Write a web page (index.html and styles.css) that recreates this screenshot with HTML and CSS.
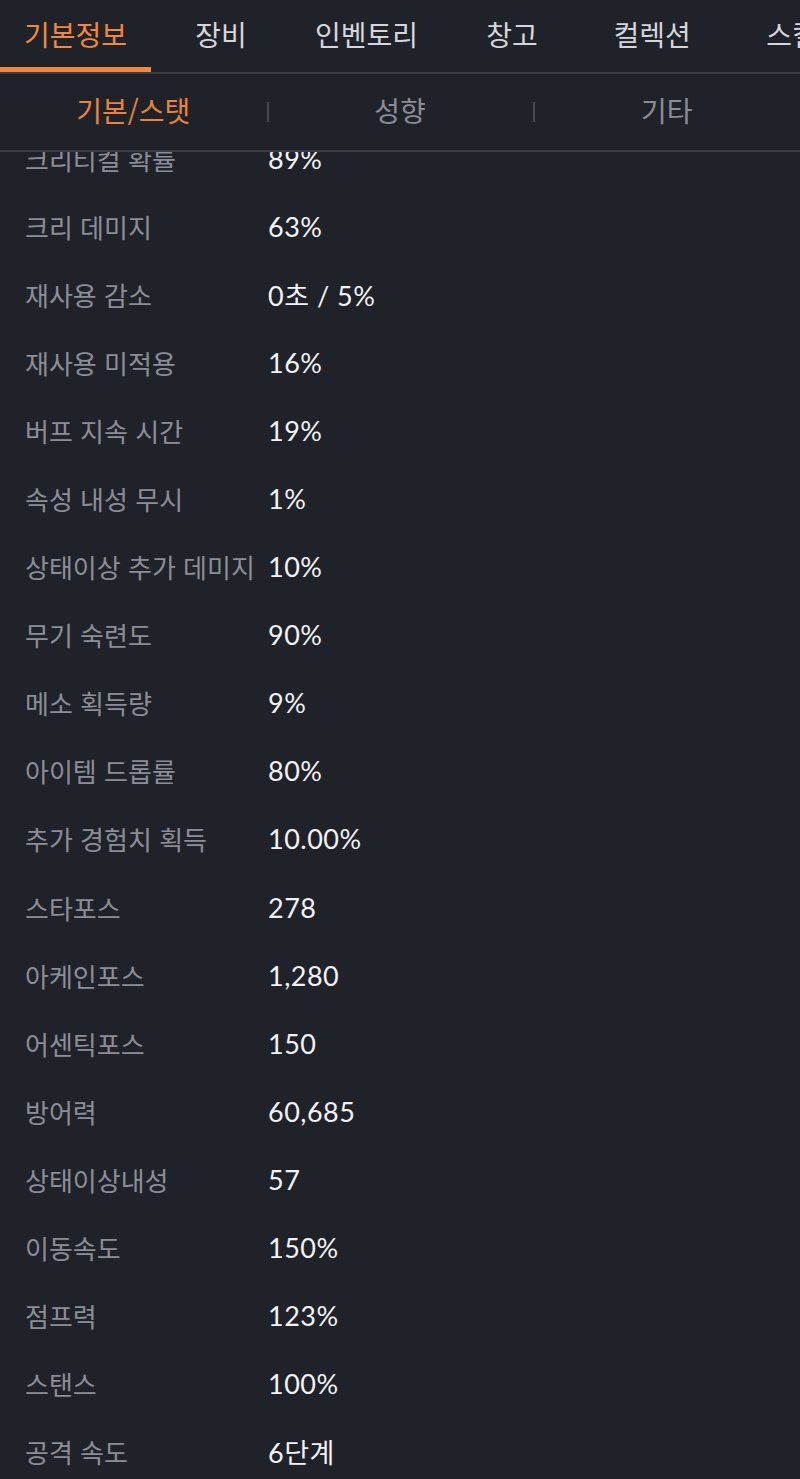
FILE: index.html
```html
<!DOCTYPE html>
<html lang="ko">
<head>
<meta charset="utf-8">
<link rel="stylesheet" href="styles.css">
</head>
<body>
<div class="page">
  <nav class="tabs">
    <div class="tab active">기본정보</div>
    <div class="tab">장비</div>
    <div class="tab">인벤토리</div>
    <div class="tab">창고</div>
    <div class="tab">컬렉션</div>
    <div class="tab">스킬</div>
  </nav>
  <nav class="subtabs">
    <div class="subtab active">기본/스탯</div>
    <div class="subtab">성향</div>
    <div class="subtab">기타</div>
  </nav>
  <div class="content">
    <ul class="stats">
      <li class="row"><span class="label">크리티컬 확률</span><span class="value">89%</span></li>
      <li class="row"><span class="label">크리 데미지</span><span class="value">63%</span></li>
      <li class="row"><span class="label">재사용 감소</span><span class="value">0초 / 5%</span></li>
      <li class="row"><span class="label">재사용 미적용</span><span class="value">16%</span></li>
      <li class="row"><span class="label">버프 지속 시간</span><span class="value">19%</span></li>
      <li class="row"><span class="label">속성 내성 무시</span><span class="value">1%</span></li>
      <li class="row"><span class="label">상태이상 추가 데미지</span><span class="value">10%</span></li>
      <li class="row"><span class="label">무기 숙련도</span><span class="value">90%</span></li>
      <li class="row"><span class="label">메소 획득량</span><span class="value">9%</span></li>
      <li class="row"><span class="label">아이템 드롭률</span><span class="value">80%</span></li>
      <li class="row"><span class="label">추가 경험치 획득</span><span class="value">10.00%</span></li>
      <li class="row"><span class="label">스타포스</span><span class="value">278</span></li>
      <li class="row"><span class="label">아케인포스</span><span class="value">1,280</span></li>
      <li class="row"><span class="label">어센틱포스</span><span class="value">150</span></li>
      <li class="row"><span class="label">방어력</span><span class="value">60,685</span></li>
      <li class="row"><span class="label">상태이상내성</span><span class="value">57</span></li>
      <li class="row"><span class="label">이동속도</span><span class="value">150%</span></li>
      <li class="row"><span class="label">점프력</span><span class="value">123%</span></li>
      <li class="row"><span class="label">스탠스</span><span class="value">100%</span></li>
      <li class="row"><span class="label">공격 속도</span><span class="value">6단계</span></li>
    </ul>
  </div>
</div>
</body>
</html>
```
FILE: styles.css
```css
html, body {
  margin: 0;
  padding: 0;
  background: #20222a;
}
body {
  font-family: "Noto Sans CJK KR", "Noto Sans", sans-serif;
  overflow: hidden;
}
.page {
  width: 800px;
  height: 1479px;
  overflow: hidden;
  display: flex;
  flex-direction: column;
  background: #20222a;
}
.tabs {
  display: flex;
  height: 72px;
  border-bottom: 2px solid #3a3d47;
  flex: none;
  white-space: nowrap;
  overflow: hidden;
}
.tab {
  position: relative;
  flex: none;
  min-width: 140px;
  box-sizing: border-box;
  padding: 0 24px 4px;
  display: flex;
  align-items: center;
  justify-content: center;
  font-size: 28px;
  color: #d4d6dc;
  line-height: 1;
}
.tab.active {
  color: #f0893b;
}
.tab.active::after {
  content: "";
  position: absolute;
  left: 0;
  right: 0;
  bottom: 0;
  height: 5px;
  background: #f0893b;
}
.subtabs {
  display: grid;
  grid-template-columns: 1fr 1fr 1fr;
  height: 76px;
  border-bottom: 2px solid #3a3d47;
  flex: none;
  position: relative;
  z-index: 1;
  background: #20222a;
}
.subtab {
  display: flex;
  align-items: center;
  justify-content: center;
  font-size: 28px;
  color: #8a8d95;
  line-height: 1;
  padding-bottom: 4px;
  position: relative;
}
.subtab.active {
  color: #e8853a;
}
.subtab + .subtab::before {
  content: "";
  position: absolute;
  left: 0;
  top: 28px;
  width: 2px;
  height: 20px;
  background: #474a54;
}
.content {
  flex: 1;
  overflow: hidden;
}
.stats {
  list-style: none;
  margin: -28px 0 0;
  padding: 0 0 0 25px;
}
.row {
  display: flex;
  align-items: center;
  height: 68.1px;
}
.label {
  width: 243px;
  flex: none;
  font-size: 26px;
  color: #8b8e96;
  white-space: nowrap;
}
.value {
  font-family: "Lato", "Noto Sans CJK KR", sans-serif;
  font-size: 27px;
  letter-spacing: 0.5px;
  color: #f2f2f4;
  white-space: nowrap;
}
```
